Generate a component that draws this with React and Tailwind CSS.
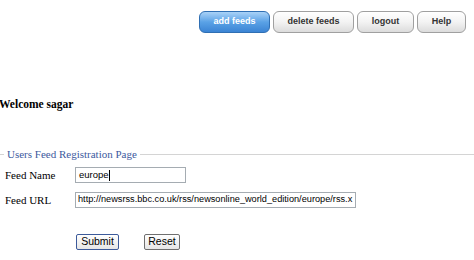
import React from "react";

const navBtn =
  "h-[22px] rounded-[6px] border border-[#a0a0a0] bg-gradient-to-b from-[#ffffff] via-[#f3f3f3] to-[#dcdcdc] text-[9px] font-bold text-[#333] flex items-center justify-center shadow-[inset_0_1px_0_#fff]";

export default function App() {
  return (
    <div className="w-[474px] h-[260px] bg-white overflow-hidden relative" style={{ fontFamily: '"Liberation Serif", serif' }}>
      <div className="flex justify-end pr-[8px] pt-[11px] gap-[3px]" style={{ fontFamily: '"Liberation Sans", Arial, sans-serif' }}>
        <div className="h-[22px] w-[71px] rounded-[6px] border border-[#2f6fb3] bg-gradient-to-b from-[#a9d2f7] via-[#5aa2e6] to-[#3b84d4] text-[9px] font-bold text-white flex items-center justify-center">
          add feeds
        </div>
        <div className={navBtn + " w-[81px]"}>delete feeds</div>
        <div className={navBtn + " w-[57px]"}>logout</div>
        <div className={navBtn + " w-[49px]"}>Help</div>
      </div>
      <div className="mt-[63px] ml-[-1px] text-[11.5px] font-bold text-black leading-[16px]">Welcome sagar</div>
      <fieldset className="mt-[35px] border-t border-[#d4d4d4] border-x-0 border-b-0 pl-[5px] pb-[10px]">
        <legend className="px-[3px] ml-[-1px] text-[11px] text-[#3d5a9e] leading-[14px] mt-[2px]">Users Feed Registration Page</legend>
        <div className="flex items-center mt-[6px] h-[16px]">
          <span className="w-[70px] text-[11px] text-black">Feed Name</span>
          <div className="w-[111px] h-[16px] border border-[#a5acb2] flex items-center px-[3px] text-[9.5px] text-black" style={{ fontFamily: '"Liberation Sans", Arial, sans-serif' }}>
            europe<span className="w-px h-[11px] bg-black" />
          </div>
        </div>
        <div className="flex items-center mt-[9px] h-[16px]">
          <span className="w-[70px] text-[11px] text-black">Feed URL</span>
          <div className="w-[281px] h-[16px] border border-[#a5acb2] flex items-center px-[2px] text-[9.2px] text-black overflow-hidden whitespace-nowrap" style={{ fontFamily: '"Liberation Sans", Arial, sans-serif' }}>
            http://newsrss.bbc.co.uk/rss/newsonline_world_edition/europe/rss.x
          </div>
        </div>
        <div className="flex mt-[26px] ml-[71px] gap-[25px]" style={{ fontFamily: '"Liberation Sans", Arial, sans-serif' }}>
          <div className="w-[43px] h-[16px] rounded-[2px] border border-[#3c5a9a] bg-gradient-to-b from-white to-[#e6e6e6] text-[10.5px] text-black flex items-center justify-center">Submit</div>
          <div className="w-[36px] h-[16px] rounded-[2px] border border-[#6f6f6f] bg-gradient-to-b from-white to-[#e6e6e6] text-[10.5px] text-black flex items-center justify-center">Reset</div>
        </div>
      </fieldset>
    </div>
  );
}
